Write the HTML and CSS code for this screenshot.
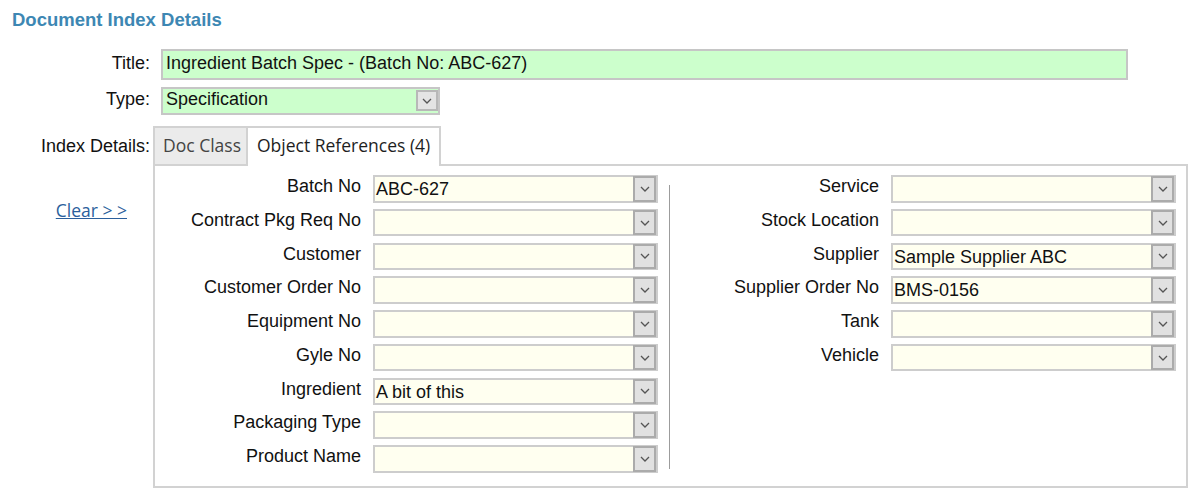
FILE: index.html
```html
<!DOCTYPE html>
<html>
<head>
<meta charset="utf-8">
<link rel="stylesheet" href="styles.css">
</head>
<body>
<div class="page">
  <h1 class="heading">Document Index Details</h1>

  <div class="row row-title">
    <div class="lbl">Title:</div>
    <div class="txt green title-input">Ingredient Batch Spec - (Batch No: ABC-627)</div>
  </div>

  <div class="row row-type">
    <div class="lbl">Type:</div>
    <div class="sel green type-sel">
      <span class="val">Specification</span>
      <span class="btn type-btn"><svg width="10" height="6" viewBox="0 0 10 6"><polyline points="1,1 5,5 9,1" fill="none" stroke="#555" stroke-width="1.3"/></svg></span>
    </div>
  </div>

  <div class="row row-index">
    <div class="side">
      <div class="lbl idx-lbl">Index Details:</div>
      <a class="clear" href="#">Clear &gt; &gt;</a>
    </div>
    <div class="tabbox">
      <div class="tabs">
        <div class="tab">Doc Class</div>
        <div class="tab active">Object References (4)</div>
      </div>
      <div class="panel">
        <div class="col col-left">
          <div class="frow"><div class="flbl">Batch No</div><div class="fsel"><span class="fval">ABC-627</span><span class="fbtn"><svg width="10" height="6" viewBox="0 0 10 6"><polyline points="1,1 5,5 9,1" fill="none" stroke="#555" stroke-width="1.3"/></svg></span></div></div>
          <div class="frow"><div class="flbl">Contract Pkg Req No</div><div class="fsel"><span class="fval"></span><span class="fbtn"><svg width="10" height="6" viewBox="0 0 10 6"><polyline points="1,1 5,5 9,1" fill="none" stroke="#555" stroke-width="1.3"/></svg></span></div></div>
          <div class="frow"><div class="flbl">Customer</div><div class="fsel"><span class="fval"></span><span class="fbtn"><svg width="10" height="6" viewBox="0 0 10 6"><polyline points="1,1 5,5 9,1" fill="none" stroke="#555" stroke-width="1.3"/></svg></span></div></div>
          <div class="frow"><div class="flbl">Customer Order No</div><div class="fsel"><span class="fval"></span><span class="fbtn"><svg width="10" height="6" viewBox="0 0 10 6"><polyline points="1,1 5,5 9,1" fill="none" stroke="#555" stroke-width="1.3"/></svg></span></div></div>
          <div class="frow"><div class="flbl">Equipment No</div><div class="fsel"><span class="fval"></span><span class="fbtn"><svg width="10" height="6" viewBox="0 0 10 6"><polyline points="1,1 5,5 9,1" fill="none" stroke="#555" stroke-width="1.3"/></svg></span></div></div>
          <div class="frow"><div class="flbl">Gyle No</div><div class="fsel"><span class="fval"></span><span class="fbtn"><svg width="10" height="6" viewBox="0 0 10 6"><polyline points="1,1 5,5 9,1" fill="none" stroke="#555" stroke-width="1.3"/></svg></span></div></div>
          <div class="frow"><div class="flbl">Ingredient</div><div class="fsel"><span class="fval">A bit of this</span><span class="fbtn"><svg width="10" height="6" viewBox="0 0 10 6"><polyline points="1,1 5,5 9,1" fill="none" stroke="#555" stroke-width="1.3"/></svg></span></div></div>
          <div class="frow"><div class="flbl">Packaging Type</div><div class="fsel"><span class="fval"></span><span class="fbtn"><svg width="10" height="6" viewBox="0 0 10 6"><polyline points="1,1 5,5 9,1" fill="none" stroke="#555" stroke-width="1.3"/></svg></span></div></div>
          <div class="frow"><div class="flbl">Product Name</div><div class="fsel"><span class="fval"></span><span class="fbtn"><svg width="10" height="6" viewBox="0 0 10 6"><polyline points="1,1 5,5 9,1" fill="none" stroke="#555" stroke-width="1.3"/></svg></span></div></div>
        </div>
        <div class="divider"></div>
        <div class="col col-right">
          <div class="frow"><div class="flbl">Service</div><div class="fsel"><span class="fval"></span><span class="fbtn"><svg width="10" height="6" viewBox="0 0 10 6"><polyline points="1,1 5,5 9,1" fill="none" stroke="#555" stroke-width="1.3"/></svg></span></div></div>
          <div class="frow"><div class="flbl">Stock Location</div><div class="fsel"><span class="fval"></span><span class="fbtn"><svg width="10" height="6" viewBox="0 0 10 6"><polyline points="1,1 5,5 9,1" fill="none" stroke="#555" stroke-width="1.3"/></svg></span></div></div>
          <div class="frow"><div class="flbl">Supplier</div><div class="fsel"><span class="fval">Sample Supplier ABC</span><span class="fbtn"><svg width="10" height="6" viewBox="0 0 10 6"><polyline points="1,1 5,5 9,1" fill="none" stroke="#555" stroke-width="1.3"/></svg></span></div></div>
          <div class="frow"><div class="flbl">Supplier Order No</div><div class="fsel"><span class="fval">BMS-0156</span><span class="fbtn"><svg width="10" height="6" viewBox="0 0 10 6"><polyline points="1,1 5,5 9,1" fill="none" stroke="#555" stroke-width="1.3"/></svg></span></div></div>
          <div class="frow"><div class="flbl">Tank</div><div class="fsel"><span class="fval"></span><span class="fbtn"><svg width="10" height="6" viewBox="0 0 10 6"><polyline points="1,1 5,5 9,1" fill="none" stroke="#555" stroke-width="1.3"/></svg></span></div></div>
          <div class="frow"><div class="flbl">Vehicle</div><div class="fsel"><span class="fval"></span><span class="fbtn"><svg width="10" height="6" viewBox="0 0 10 6"><polyline points="1,1 5,5 9,1" fill="none" stroke="#555" stroke-width="1.3"/></svg></span></div></div>
        </div>
      </div>
    </div>
  </div>
</div>
</body>
</html>
```

FILE: styles.css
```css
* { box-sizing: border-box; }

html, body {
  margin: 0;
  padding: 0;
  background: #ffffff;
}

body {
  font-family: "Liberation Sans", Arial, sans-serif;
  font-size: 18px;
  color: #111;
}

.page {
  padding: 10px 0 0 12px;
  width: 1200px;
}

.heading {
  margin: 0;
  font-size: 18.5px;
  line-height: 20px;
  font-weight: bold;
  color: #3d87b3;
}

.row {
  display: flex;
}

.lbl {
  width: 138px;
  text-align: right;
  line-height: 22px;
  color: #111;
}

.row-title {
  margin-top: 19px;
  align-items: baseline;
}

.row-type {
  margin-top: 7px;
  align-items: baseline;
}

.green {
  background: #ccffcc;
}

.txt {
  margin-left: 11px;
  width: 967px;
  height: 31px;
  border: 2px solid #c6c6c6;
  padding: 1px 0 4px 3px;
  line-height: 22px;
  white-space: nowrap;
}

.sel {
  display: flex;
  margin-left: 11px;
  width: 279px;
  height: 28px;
  border: 2px solid #c6c6c6;
  padding: 0 0 4px 3px;
}

.sel .val {
  flex: 1;
  line-height: 20px;
}

.type-btn {
  align-self: center;
  width: 22px;
  height: 21px;
  margin-top: 3px;
  border: 2px solid #b8b8b8;
  background: #e4e4e4;
  display: flex;
  align-items: center;
  justify-content: center;
}

.row-index {
  margin-top: 11px;
  align-items: flex-start;
}

.side {
  width: 138px;
  display: flex;
  flex-direction: column;
}

.idx-lbl {
  padding-top: 9px;
}

.clear {
  margin-top: 41px;
  display: block;
  text-align: right;
  padding-right: 23px;
  font-family: "Open Sans", "Noto Sans", sans-serif;
  font-size: 17.5px;
  line-height: 24px;
  color: #2b5f9c;
  text-decoration: underline;
}

.tabbox {
  margin-left: 3px;
  width: 1035px;
}

.tabs {
  display: flex;
  height: 38px;
  position: relative;
  z-index: 1;
}

.tab {
  font-family: "Open Sans", "Noto Sans", sans-serif;
  font-size: 17.5px;
  line-height: 34px;
  height: 38px;
  padding: 0 0 2px 8px;
  width: 95px;
  background: #ebebeb;
  color: #444;
  border: 2px solid #d2d2d2;
  border-bottom: none;
  white-space: nowrap;
}

.tab.active {
  width: 193px;
  padding-left: 9px;
  background: #ffffff;
  color: #1e1e1e;
  border-left: none;
  height: 40px;
  padding-bottom: 4px;
}

.panel {
  border: 2px solid #d2d2d2;
  display: flex;
  align-items: flex-start;
  padding: 9px 10px 13px 0;
}

.col {
  display: flex;
  flex-direction: column;
  gap: 6.25px;
}

.col-left .frow {
  grid-template-columns: 206px 285px;
}

.col-right .frow {
  grid-template-columns: 209px 285px;
}

.frow {
  display: grid;
  column-gap: 12px;
  height: 27.5px;
}

.flbl {
  text-align: right;
  line-height: 22px;
  white-space: nowrap;
  color: #111;
}

.fsel {
  display: flex;
  height: 27.5px;
  border: 2px solid #cdcdcd;
  background: #fffff0;
}

.fval {
  flex: 1;
  padding: 1px 0 0 1px;
  line-height: 22px;
  white-space: nowrap;
  color: #111;
}

.fbtn {
  width: 23px;
  border: 2px solid #ababab;
  background: #e1e1e1;
  display: flex;
  align-items: center;
  justify-content: center;
  margin: -1px 0 -1px 0;
}

.divider {
  align-self: stretch;
  width: 1px;
  margin: 10px 0 4px 11px;
  background: #9c9c9c;
}
```
